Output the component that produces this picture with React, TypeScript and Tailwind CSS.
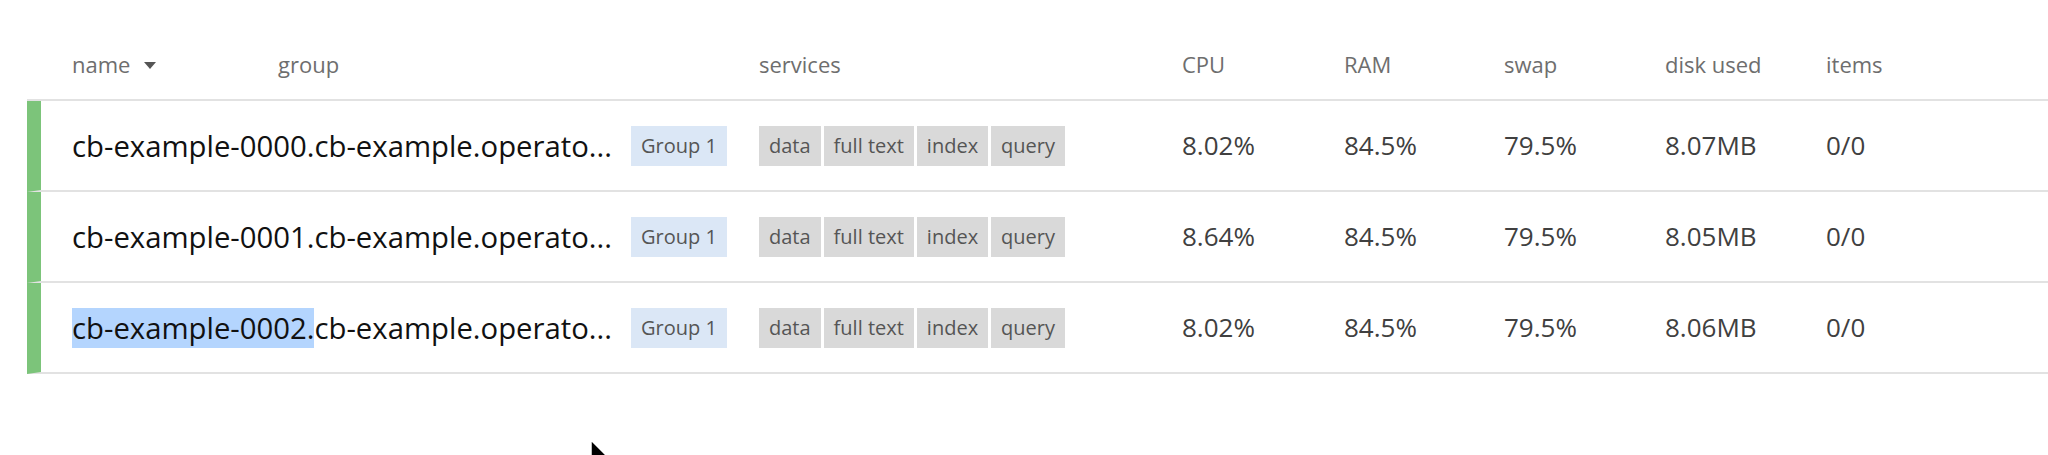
import React from 'react';

interface ServerRow {
  host: string;
  selected?: string;
  group: string;
  services: string[];
  cpu: string;
  ram: string;
  swap: string;
  disk: string;
  items: string;
}

const rows: ServerRow[] = [
  {
    host: 'cb-example-0000.cb-example.operato...',
    group: 'Group 1',
    services: ['data', 'full text', 'index', 'query'],
    cpu: '8.02%',
    ram: '84.5%',
    swap: '79.5%',
    disk: '8.07MB',
    items: '0/0',
  },
  {
    host: 'cb-example-0001.cb-example.operato...',
    group: 'Group 1',
    services: ['data', 'full text', 'index', 'query'],
    cpu: '8.64%',
    ram: '84.5%',
    swap: '79.5%',
    disk: '8.05MB',
    items: '0/0',
  },
  {
    host: 'cb-example.operato...',
    selected: 'cb-example-0002.',
    group: 'Group 1',
    services: ['data', 'full text', 'index', 'query'],
    cpu: '8.02%',
    ram: '84.5%',
    swap: '79.5%',
    disk: '8.06MB',
    items: '0/0',
  },
];

function SortArrow() {
  return (
    <svg width="12" height="7" viewBox="0 0 12 7" className="ml-[14px] mt-[2px]">
      <path d="M0 0 L12 0 L6 7 Z" fill="#555" />
    </svg>
  );
}

function Cursor() {
  return (
    <svg
      width="24"
      height="34"
      viewBox="0 0 24 34"
      className="absolute left-[589px] top-[439px]"
    >
      <path d="M2 1 L2 27 L8 21 L12 31 L16 29 L12 20 L21 20 Z" fill="#000" stroke="#fff" strokeWidth="1.5" />
    </svg>
  );
}

export default function App() {
  return (
    <div className="relative h-[455px] w-full overflow-hidden bg-white font-['Open_Sans','Liberation_Sans',sans-serif]">
      <div className="ml-[27px]">
        <div className="flex h-[101px] items-center border-b-2 border-[#e2e2e2] pl-[45px] pt-[30px] text-[22px] text-[#6e6e6e]">
          <div className="flex w-[206px] items-center">
            name
            <SortArrow />
          </div>
          <div className="w-[481px]">group</div>
          <div className="w-[423px]">services</div>
          <div className="w-[162px]">CPU</div>
          <div className="w-[160px]">RAM</div>
          <div className="w-[161px]">swap</div>
          <div className="w-[161px]">disk used</div>
          <div>items</div>
        </div>

        {rows.map((row, i) => (
          <div
            key={i}
            className="flex h-[91px] items-center border-b-2 border-l-[14px] border-b-[#e2e2e2] border-l-[#7cc47a] pl-[31px]"
          >
            <div className="w-[559px] whitespace-nowrap text-[29.3px] font-medium leading-[40px] text-[#111]">
              {row.selected && <span className="bg-[#b4d5fe]">{row.selected}</span>}
              {row.host}
            </div>
            <div className="w-[128px]">
              <span className="inline-block h-[40px] bg-[#dbe7f6] px-[10px] text-[20px] leading-[40px] text-[#555]">
                {row.group}
              </span>
            </div>
            <div className="flex w-[423px] gap-[3px]">
              {row.services.map((s) => (
                <span
                  key={s}
                  className="h-[40px] bg-[#d9d9d9] px-[10px] text-[20px] leading-[40px] text-[#555]"
                >
                  {s}
                </span>
              ))}
            </div>
            <div className="w-[162px] text-[26px] text-[#404040]">{row.cpu}</div>
            <div className="w-[160px] text-[26px] text-[#404040]">{row.ram}</div>
            <div className="w-[161px] text-[26px] text-[#404040]">{row.swap}</div>
            <div className="w-[161px] text-[26px] text-[#404040]">{row.disk}</div>
            <div className="text-[26px] text-[#404040]">{row.items}</div>
          </div>
        ))}
      </div>
      <Cursor />
    </div>
  );
}
